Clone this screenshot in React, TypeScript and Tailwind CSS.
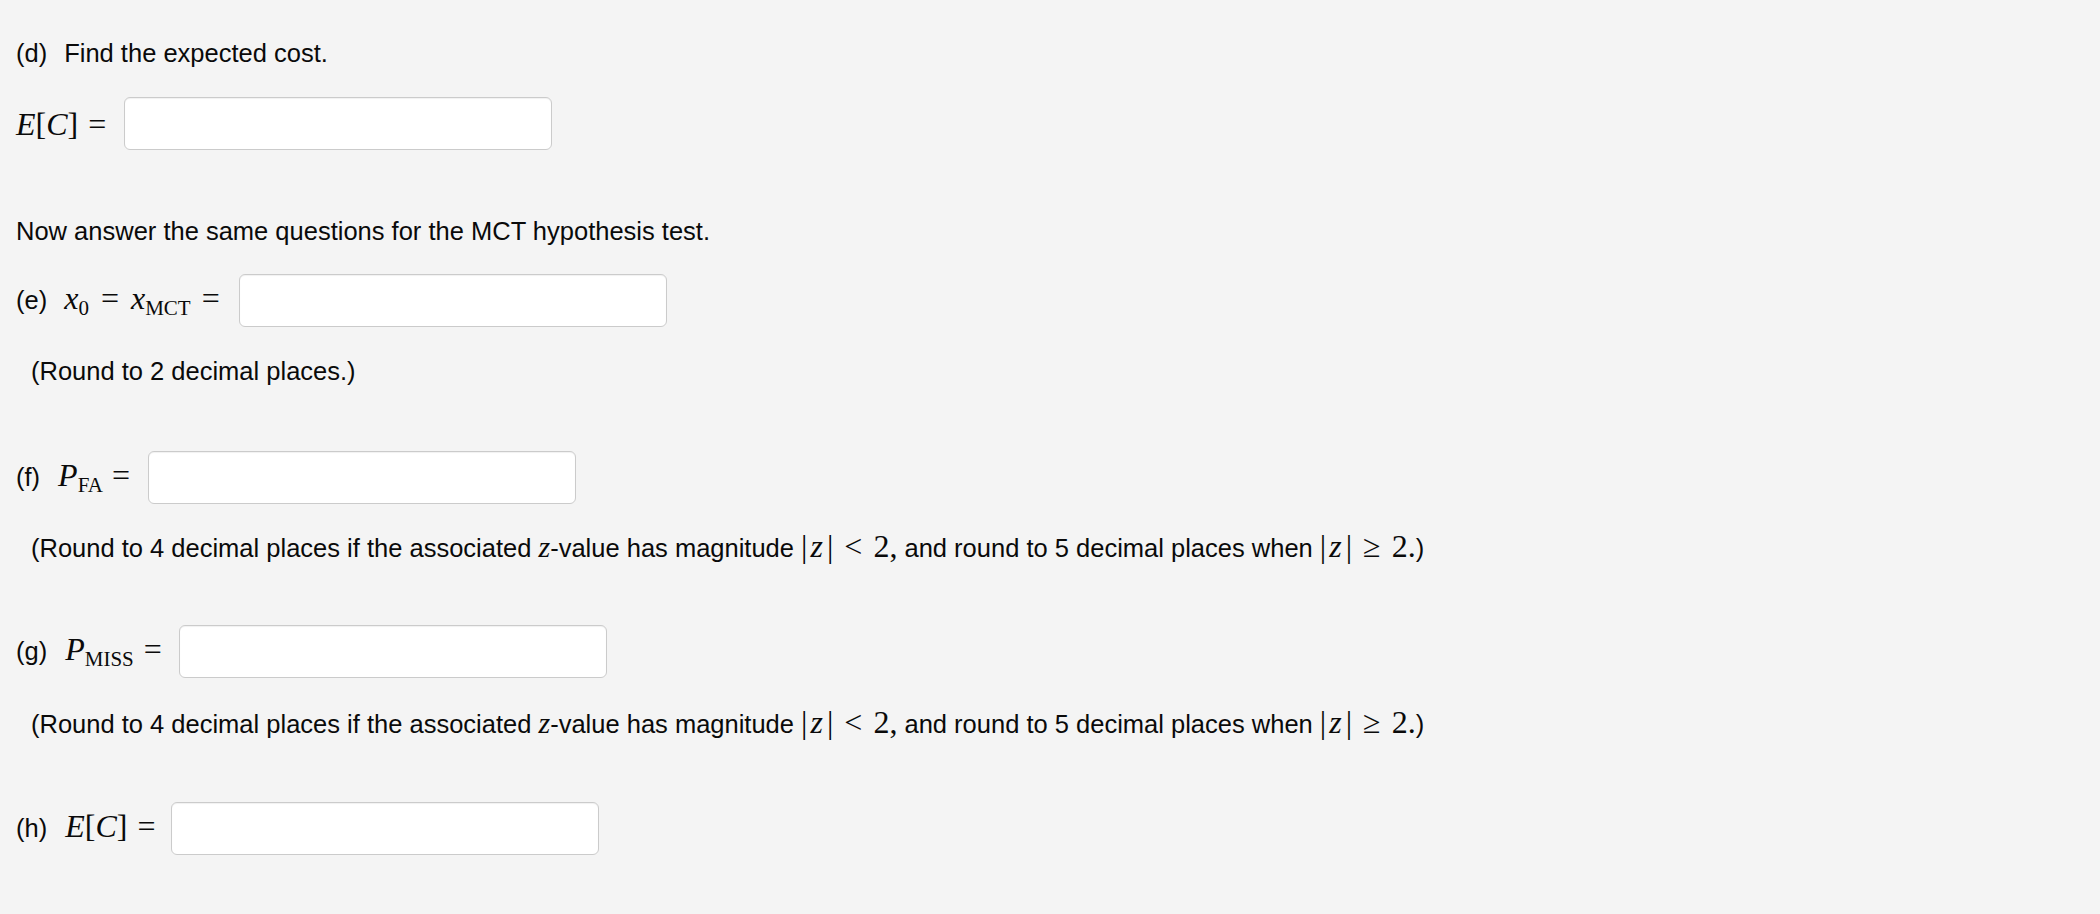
import React from "react";

const M = ({ children, size = "text-[32px]" }: { children: React.ReactNode; size?: string }) => (
  <span className={`font-['Liberation_Serif','Times_New_Roman',serif] leading-none ${size}`}>{children}</span>
);
const I = ({ children }: { children: React.ReactNode }) => <span className="italic">{children}</span>;
const Sub = ({ children }: { children: React.ReactNode }) => (
  <span className="text-[21px] align-[-6px]">{children}</span>
);

const Box = () => (
  <input
    type="text"
    className="w-[428px] h-[53px] bg-white border border-[#cbcbcb] rounded-[6px] shadow-[inset_0_1px_1px_rgba(0,0,0,0.06)] outline-none"
  />
);

const Note = ({ children, mt }: { children: React.ReactNode; mt: string }) => (
  <div className={`pl-[15px] h-[36px] leading-[36px] whitespace-nowrap ${mt}`}>{children}</div>
);

const Abs = () => (
  <>
    <span className="mr-[3px]">|</span>
    <I>z</I>
    <span className="ml-[4px]">|</span>
  </>
);

const ZNote = () => (
  <>
    (Round to 4 decimal places if the associated{" "}
    <M size="text-[30px]">
      <I>z</I>
    </M>
    -value has magnitude{" "}
    <M>
      <Abs />
      <span className="mx-[11px]">&lt;</span>2,
    </M>{" "}
    and round to 5 decimal places when{" "}
    <M>
      <Abs />
      <span className="mx-[11px]">≥</span>2.
    </M>
    )
  </>
);

export default function App() {
  return (
    <div className="min-h-[914px] w-full bg-[#f4f4f4] text-[#0a0a0a] font-['Liberation_Sans',Arial,sans-serif] text-[25.5px] pl-[16px] pt-[35px]">
      <div className="h-[36px] leading-[36px] flex">
        <span>(d)</span>
        <span className="ml-[17px]">Find the expected cost.</span>
      </div>

      <div className="mt-[26px] flex items-center h-[53px]">
        <M>
          <I>E</I>[<I>C</I>]<span className="ml-[10px] mr-[18px]">=</span>
        </M>
        <Box />
      </div>

      <div className="mt-[63px] h-[36px] leading-[36px]">Now answer the same questions for the MCT hypothesis test.</div>

      <div className="mt-[25px] flex items-center h-[53px]">
        <span>(e)</span>
        <span className="ml-[17px]">
          <M>
            <I>x</I>
            <Sub>0</Sub>
            <span className="mx-[12px]">=</span>
            <I>x</I>
            <Sub>MCT</Sub>
            <span className="ml-[11px] mr-[19px]">=</span>
          </M>
        </span>
        <Box />
      </div>

      <Note mt="mt-[26px]">(Round to 2 decimal places.)</Note>

      <div className="mt-[62px] flex items-center h-[53px]">
        <span>(f)</span>
        <span className="ml-[18px]">
          <M>
            <I>P</I>
            <Sub>FA</Sub>
            <span className="ml-[9px] mr-[18px]">=</span>
          </M>
        </span>
        <Box />
      </div>

      <Note mt="mt-[26px]">
        <ZNote />
      </Note>

      <div className="mt-[59px] flex items-center h-[53px]">
        <span>(g)</span>
        <span className="ml-[18px]">
          <M>
            <I>P</I>
            <Sub>MISS</Sub>
            <span className="ml-[10px] mr-[17px]">=</span>
          </M>
        </span>
        <Box />
      </div>

      <Note mt="mt-[28px]">
        <ZNote />
      </Note>

      <div className="mt-[60px] flex items-center h-[53px]">
        <span>(h)</span>
        <span className="ml-[18px]">
          <M>
            <I>E</I>[<I>C</I>]<span className="ml-[10px] mr-[16px]">=</span>
          </M>
        </span>
        <Box />
      </div>
    </div>
  );
}
